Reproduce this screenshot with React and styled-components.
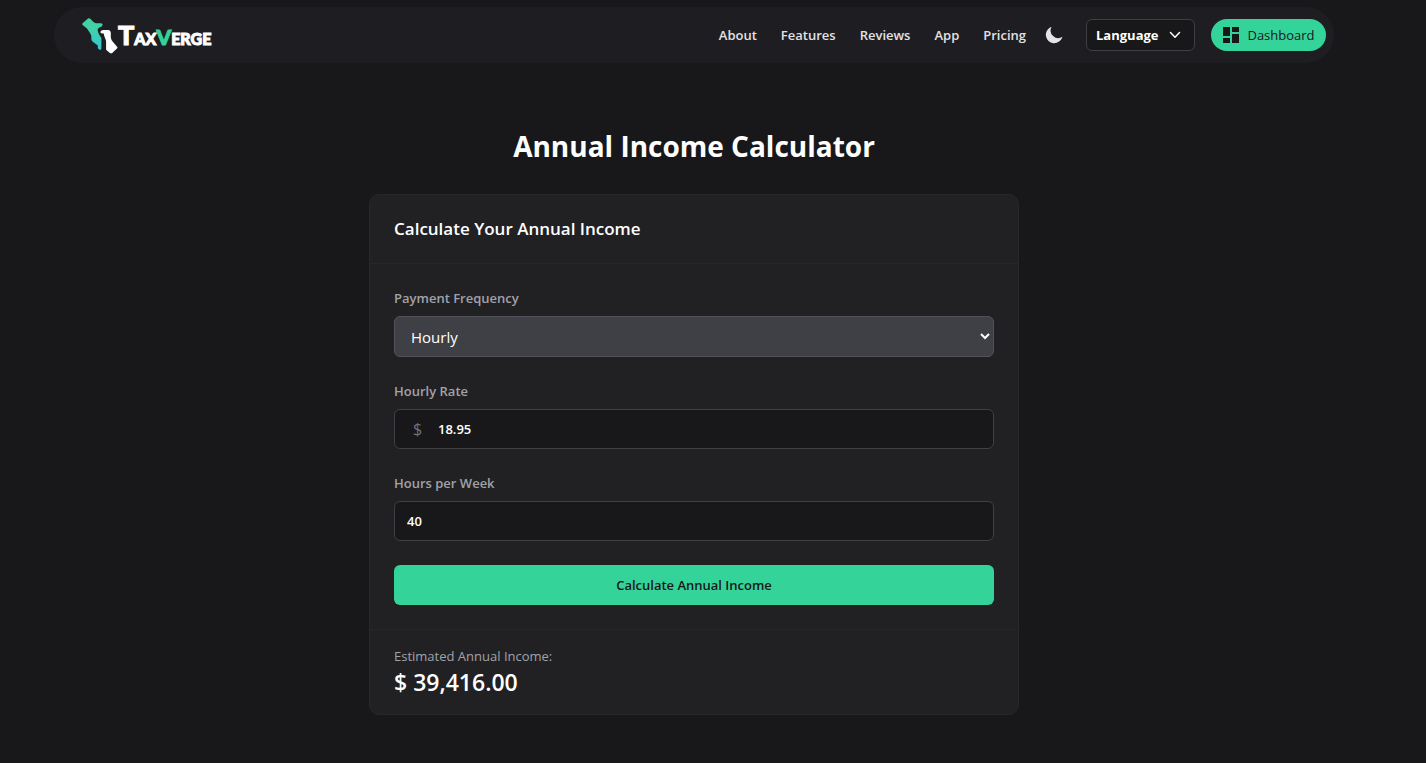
import { useState } from 'react';
import styled, { createGlobalStyle } from 'styled-components';

const NAV_LINKS = ['About', 'Features', 'Reviews', 'App', 'Pricing'];

// Pay periods per year for every frequency that is not hourly.
const PERIODS = { Daily: 260, Weekly: 52, 'Bi-Weekly': 26, Monthly: 12 };

const GlobalStyle = createGlobalStyle`
  *, *::before, *::after {
    box-sizing: border-box;
  }

  body {
    margin: 0;
    background: #18181a;
    color: #fff;
    font-family: 'Segoe UI', 'Open Sans', 'Noto Sans', sans-serif;
    font-size: 14px;
    line-height: 20px;
  }

  button, input, select {
    font: inherit;
    color: inherit;
  }
`;

const Page = styled.div`
  min-height: 100vh;
  padding: 7px 38px 48px 0;
`;

const Header = styled.header`
  display: flex;
  align-items: center;
  justify-content: space-between;
  max-width: 1280px;
  height: 56px;
  margin: 0 auto;
  padding: 0 8px 0 28px;
  border-radius: 28px;
  background: #1e1e22;
`;

const Logo = styled.a`
  display: flex;
  align-items: center;
  color: #fff;
  text-decoration: none;
`;

const LogoMark = styled.svg`
  width: 36px;
  height: 38px;
  flex-shrink: 0;
`;

const LogoText = styled.span`
  padding-top: 3px;
  font-family: Lato, sans-serif;
  font-size: 16px;
  font-weight: 900;
  line-height: 32px;
  -webkit-text-stroke: 1px currentColor;
`;

const LogoLetter = styled.span`
  font-size: ${({ $size }) => $size}px;
  color: ${({ $accent }) => ($accent ? '#34d399' : 'inherit')};
`;

const Nav = styled.nav`
  display: flex;
  align-items: center;
  gap: 24px;
`;

const NavLink = styled.a`
  color: #e2e2e5;
  font-size: 13px;
  font-weight: 600;
  text-decoration: none;
`;

const Actions = styled.div`
  display: flex;
  align-items: center;
  gap: 16px;
`;

const HeaderRight = styled.div`
  display: flex;
  align-items: center;
  gap: 16px;
`;

const IconButton = styled.button`
  display: flex;
  align-items: center;
  justify-content: center;
  width: 24px;
  height: 24px;
  padding: 0;
  border: 0;
  background: none;
  color: #e4e4e7;
  cursor: pointer;
`;

const LanguageButton = styled.button`
  display: flex;
  align-items: center;
  justify-content: space-between;
  width: 109px;
  height: 32px;
  margin-left: 4px;
  padding: 0 13px 0 9px;
  border: 1px solid #3f3f46;
  border-radius: 6px;
  background: #18181a;
  font-size: 13px;
  font-weight: 700;
  cursor: pointer;
`;

const DashboardLink = styled.a`
  display: flex;
  align-items: center;
  justify-content: center;
  gap: 7px;
  width: 115px;
  height: 32px;
  border-radius: 16px;
  background: #34d399;
  color: #18181b;
  font-size: 13px;
  font-weight: 500;
  text-decoration: none;
`;

const Main = styled.main`
  max-width: 650px;
  margin: 64px auto 0;
`;

const Title = styled.h1`
  margin: 0 0 28px;
  font-size: 28px;
  font-weight: 700;
  line-height: 39px;
  text-align: center;
`;

const Card = styled.section`
  border: 1px solid #27272a;
  border-radius: 10px;
  background: #212123;
`;

const CardHeader = styled.div`
  padding: 20px 24px;
  border-bottom: 1px solid #27272a;
`;

const CardTitle = styled.h2`
  margin: 0;
  font-size: 17px;
  font-weight: 600;
  line-height: 28px;
`;

const Form = styled.form`
  display: flex;
  flex-direction: column;
  gap: 24px;
  padding: 24px;
`;

const Field = styled.div`
  display: flex;
  flex-direction: column;
  gap: 8px;
`;

const Label = styled.label`
  color: #a1a1aa;
  font-size: 13px;
  font-weight: 600;
  line-height: 20px;
`;

const Select = styled.select`
  height: 41px;
  padding: 0 0 0 12px;
  border: 1px solid #52525b;
  border-radius: 6px;
  background: #3f3f46;
  font-size: 15px;
`;

const InputBox = styled.div`
  display: flex;
  align-items: center;
  height: 40px;
  padding: 0 12px;
  border: 1px solid #3f3f46;
  border-radius: 6px;
  background: #18181a;
`;

const Currency = styled.span`
  width: 31px;
  padding-left: 6px;
  color: #71717a;
  font-size: 16px;
`;

const Input = styled.input`
  flex: 1;
  min-width: 0;
  padding: 0;
  border: 0;
  outline: 0;
  background: none;
  font-size: 13px;
  font-weight: 600;
`;

const SubmitButton = styled.button`
  height: 40px;
  border: 0;
  border-radius: 6px;
  background: #34d399;
  color: #18181b;
  font-size: 13px;
  font-weight: 600;
  cursor: pointer;
`;

const Result = styled.div`
  padding: 16px 24px;
  border-top: 1px solid #27272a;
`;

const ResultLabel = styled.p`
  margin: 0;
  color: #a1a1aa;
  font-size: 13px;
  line-height: 20px;
`;

const ResultValue = styled.p`
  margin: 0;
  font-size: 23px;
  font-weight: 600;
  line-height: 32px;
`;

function Brand() {
  return (
    <Logo href="#home" aria-label="TaxVerge">
      <LogoMark viewBox="0 -2 36 38" aria-hidden="true">
        <defs>
          <linearGradient id="mark" x1="0" y1="0" x2="0" y2="1">
            <stop offset="0" stopColor="#3fd39d" />
            <stop offset="0.45" stopColor="#3fd0b0" />
            <stop offset="1" stopColor="#35c2d2" />
          </linearGradient>
        </defs>
        <path
          d="M6 0.4Q7 -0.2 8 0.6L11.5 4Q12.5 5 14 5.2L19 5.3Q21 5.5 20.6 7Q20 9 17.5 9.4Q15.5 10 15.6 12Q16 14 16.8 16L19.4 20V30.5Q19 32.5 17.2 31.6L15.8 30.2V27.5L10.5 23.5Q9 22 9.4 19.5Q9.6 17 8 15L5 10.5L0.6 7Q-0.2 6 0.8 5Z"
          fill="url(#mark)"
        />
        <path
          d="M18.5 13.6Q19 11.9 21.5 12H26Q28.8 12.3 28.8 15V19.5Q29 21.5 31 24L35.3 29Q35.8 29.8 35 30.5L30.2 35Q29 35.8 28 35L24.8 32.5Q23.8 31.5 24.1 30V24Q24.2 22 23.2 20.5Q22 18 21.7 15.6L19 15.2Q18.3 14.8 18.5 13.6Z"
          fill="#fff"
        />
      </LogoMark>
      <LogoText>
        <LogoLetter $size={27}>T</LogoLetter>AX
        <LogoLetter $size={21} $accent>V</LogoLetter>ERGE
      </LogoText>
    </Logo>
  );
}

function MoonIcon() {
  return (
    <svg width="18" height="18" viewBox="0 0 18 18" fill="currentColor" aria-hidden="true">
      <path d="M6.6 0.8A8.4 8.4 0 1 0 17.4 10.8A7.6 7.6 0 0 1 6.6 0.8Z" />
    </svg>
  );
}

function ChevronIcon() {
  return (
    <svg width="12" height="12" viewBox="0 0 12 12" fill="none" aria-hidden="true">
      <path
        d="M1.5 3.5L6 8.2L10.5 3.5"
        stroke="currentColor"
        strokeWidth="1.5"
        strokeLinecap="round"
        strokeLinejoin="round"
      />
    </svg>
  );
}

function DashboardIcon() {
  return (
    <svg width="18" height="18" viewBox="0 0 18 18" fill="currentColor" aria-hidden="true">
      <path d="M1 1h7v9H1zM1 12h7v5H1zM10 1h7v5h-7zM10 8h7v9h-7z" />
    </svg>
  );
}

function calculate(frequency, rate, hours) {
  if (frequency === 'Hourly') return rate * hours * 52;
  return rate * PERIODS[frequency];
}

function App() {
  const [frequency, setFrequency] = useState('Hourly');
  const [rate, setRate] = useState('18.95');
  const [hours, setHours] = useState('40');
  const [income, setIncome] = useState(39416);

  const handleSubmit = (e) => {
    e.preventDefault();
    setIncome(calculate(frequency, Number(rate), Number(hours)));
  };

  return (
    <Page>
      <GlobalStyle />
      <Header>
        <Brand />
        <HeaderRight>
          <Nav>
            {NAV_LINKS.map((name) => (
              <NavLink key={name} href={`#${name.toLowerCase()}`}>
                {name}
              </NavLink>
            ))}
          </Nav>
          <Actions>
            <IconButton type="button" aria-label="Toggle theme">
              <MoonIcon />
            </IconButton>
            <LanguageButton type="button">
              Language
              <ChevronIcon />
            </LanguageButton>
            <DashboardLink href="#dashboard">
              <DashboardIcon />
              Dashboard
            </DashboardLink>
          </Actions>
        </HeaderRight>
      </Header>

      <Main>
        <Title>Annual Income Calculator</Title>
        <Card>
          <CardHeader>
            <CardTitle>Calculate Your Annual Income</CardTitle>
          </CardHeader>
          <Form onSubmit={handleSubmit}>
            <Field>
              <Label htmlFor="frequency">Payment Frequency</Label>
              <Select
                id="frequency"
                value={frequency}
                onChange={(e) => setFrequency(e.target.value)}
              >
                <option>Hourly</option>
                {Object.keys(PERIODS).map((name) => (
                  <option key={name}>{name}</option>
                ))}
              </Select>
            </Field>
            <Field>
              <Label htmlFor="rate">Hourly Rate</Label>
              <InputBox>
                <Currency>$</Currency>
                <Input
                  id="rate"
                  inputMode="decimal"
                  value={rate}
                  onChange={(e) => setRate(e.target.value)}
                />
              </InputBox>
            </Field>
            <Field>
              <Label htmlFor="hours">Hours per Week</Label>
              <InputBox>
                <Input
                  id="hours"
                  inputMode="numeric"
                  value={hours}
                  onChange={(e) => setHours(e.target.value)}
                />
              </InputBox>
            </Field>
            <SubmitButton type="submit">Calculate Annual Income</SubmitButton>
          </Form>
          <Result>
            <ResultLabel>Estimated Annual Income:</ResultLabel>
            <ResultValue>
              $ {income.toLocaleString('en-US', { minimumFractionDigits: 2, maximumFractionDigits: 2 })}
            </ResultValue>
          </Result>
        </Card>
      </Main>
    </Page>
  );
}

export default App;
